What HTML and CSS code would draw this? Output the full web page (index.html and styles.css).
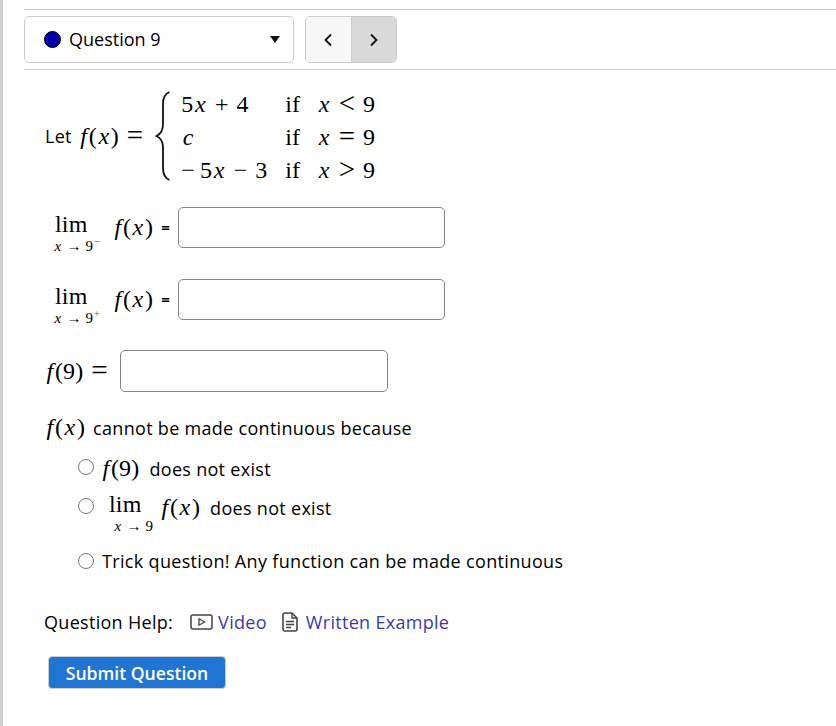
FILE: index.html
```html
<!DOCTYPE html>
<html>
<head>
    <meta charset="UTF-8">
    <link rel="stylesheet" href="styles.css">
</head>
<body>
    <div class="page">
        <div class="nav">
            <div class="select">
                <span class="dot"></span>
                <span class="select-label">Question 9</span>
                <span class="caret"></span>
            </div>
            <div class="pager">
                <button class="page-btn">
                    <svg width="10" height="14" viewBox="0 0 10 14"><path d="M8 1.5 2.5 7 8 12.5" fill="none" stroke="#111" stroke-width="1.8"/></svg>
                </button>
                <button class="page-btn page-btn-active">
                    <svg width="10" height="14" viewBox="0 0 10 14"><path d="M2 1.5 7.5 7 2 12.5" fill="none" stroke="#111" stroke-width="1.8"/></svg>
                </button>
            </div>
        </div>

        <div class="question">
            <div class="def">
                <span>Let</span>
                <span class="math"><i>f</i>(<i>x</i>) <span class="rel">=</span></span>
                <svg class="brace" width="16" height="90" viewBox="0 0 16 90">
                    <path d="M14.500 1C9.500 3 8 7 8 13V33C8 39 6 43 1.500 45C6 47 8 51 8 57V77C8 83 9.500 87 14.500 89" fill="none" stroke="#111" stroke-width="1.8"/>
                </svg>
                <div class="cases math">
                    <span>5<i>x</i> + 4</span><span>if</span><span><i>x</i> <span class="rel">&lt;</span> 9</span>
                    <span><i>c</i></span><span>if</span><span><i>x</i> <span class="rel">=</span> 9</span>
                    <span>&minus;&#8201;5<i>x</i> &minus; 3</span><span>if</span><span><i>x</i> <span class="rel">&gt;</span> 9</span>
                </div>
            </div>

            <div class="limit-row">
                <span class="lim math">lim<small><i>x</i> &rarr; 9<sup>&minus;</sup></small></span>
                <span class="math"><i>f</i>(<i>x</i>)</span>
                <b class="eq">=</b>
                <input class="answer" type="text">
            </div>

            <div class="limit-row">
                <span class="lim math">lim<small><i>x</i> &rarr; 9<sup>+</sup></small></span>
                <span class="math"><i>f</i>(<i>x</i>)</span>
                <b class="eq">=</b>
                <input class="answer" type="text">
            </div>

            <div class="value-row">
                <span class="math"><i>f</i>(9) <span class="rel">=</span></span>
                <input class="answer answer-wide" type="text">
            </div>

            <p class="prompt"><span class="math"><i>f</i>(<i>x</i>)</span> cannot be made continuous because</p>

            <ul class="choices">
                <li class="choice choice-one">
                    <input type="radio" name="why">
                    <span><span class="math"><i>f</i>(9)</span> does not exist</span>
                </li>
                <li class="choice choice-two">
                    <input type="radio" name="why">
                    <span class="lim lim-choice math">lim<small><i>x</i> &rarr; 9</small></span>
                    <span><span class="math"><i>f</i>(<i>x</i>)</span> does not exist</span>
                </li>
                <li class="choice choice-three">
                    <input type="radio" name="why">
                    <span>Trick question! Any function can be made continuous</span>
                </li>
            </ul>

            <div class="help">
                <span class="help-label">Question Help:</span>
                <a class="help-link" href="#">
                    <svg width="23" height="16" viewBox="0 0 23 16"><rect x="1" y="1" width="21" height="14" rx="2" fill="none" stroke="#444" stroke-width="1.5"/><path d="M9 4.800 14.500 8 9 11.200Z" fill="none" stroke="#444" stroke-width="1.3"/></svg>
                    Video
                </a>
                <a class="help-link" href="#">
                    <svg class="doc-icon" width="16" height="20" viewBox="0 0 16 20"><path d="M1 3C1 2 2 1 3 1H10L15 6V17C15 18 14 19 13 19H3C2 19 1 18 1 17Z" fill="none" stroke="#444" stroke-width="1.6"/><path d="M10 1V6H15M4 9.500H12M4 12.500H12M4 15.500H9" fill="none" stroke="#444" stroke-width="1.4"/></svg>
                    Written Example
                </a>
            </div>

            <button class="submit">Submit Question</button>
        </div>
    </div>
</body>
</html>
```
FILE: styles.css
```css
* {
    box-sizing: border-box;
}

html, body {
    height: 100%;
}

body {
    margin: 0;
    background: #fff;
    color: #000;
    font-family: "Open Sans", Tahoma, sans-serif;
    font-size: 18px;
    letter-spacing: 0.3px;
    border-left: 3px solid #d0d0d6;
    overflow: hidden;
}

.page {
    padding: 9px 0 0 21px;
}

.nav {
    display: flex;
    gap: 11px;
    border-top: 1px solid #ccc;
    border-bottom: 1px solid #ccc;
    padding: 6px 0;
    height: 61px;
}

.select {
    width: 270px;
    height: 47px;
    border: 1px solid #ccc;
    border-radius: 5px;
    display: flex;
    align-items: center;
    padding: 0 13px 0 19px;
}

.dot {
    width: 17px;
    height: 17px;
    border-radius: 50%;
    background: #0000aa;
    border: 1px solid #000;
    margin-right: 8px;
}

.select-label {
    flex: 1;
    letter-spacing: 0;
    margin-top: -2px;
}

.caret {
    width: 0;
    height: 0;
    border-left: 5px solid transparent;
    border-right: 5px solid transparent;
    border-top: 7px solid #111;
}

.pager {
    display: flex;
    height: 47px;
    border: 1px solid #ccc;
    border-radius: 5px;
    overflow: hidden;
}

.page-btn {
    width: 45px;
    border: none;
    background: #f7f7f7;
    padding: 0 2px 0 0;
    display: flex;
    align-items: center;
    justify-content: center;
}

.page-btn-active {
    width: 45px;
    background: #d9d9d9;
    border-left: 1px solid #ccc;
    padding: 0;
}

.question {
    padding-left: 21px;
}

.math {
    font-family: "Liberation Serif", serif;
    font-size: 24px;
    letter-spacing: 0.2px;
    word-spacing: 1.5px;
    white-space: nowrap;
}

.math i {
    padding: 0 1.5px;
}

/* relation signs are wider in the math font */
.rel {
    font-size: 29px;
    line-height: 0;
    vertical-align: -1px;
}

.def {
    display: flex;
    align-items: center;
    gap: 7px;
    margin-top: 21px;
    height: 90px;
}

.brace {
    margin-left: 5px;
}

.cases {
    display: grid;
    grid-template-columns: 104px 32px auto;
    row-gap: 6px;
    line-height: 27px;
    margin: 2px 0 0 3px;
}

.limit-row {
    display: flex;
    align-items: center;
    margin-top: 21px;
    height: 50px;
    padding-left: 10px;
}

.limit-row + .limit-row {
    margin-top: 22px;
}

.lim {
    display: inline-flex;
    flex-direction: column;
    align-items: flex-start;
    width: 58px;
    line-height: 27px;
    margin-top: 12px;
}

.lim small {
    font-size: 15px;
    line-height: 17px;
    letter-spacing: 0.6px;
    margin-left: -2px;
    word-spacing: -1px;
}

.lim sup {
    font-size: 11px;
    line-height: 0;
    color: #555;
}

.eq {
    margin: 0 8px 0 8px;
    font-size: 15px;
    letter-spacing: 0;
}

.answer {
    width: 267px;
    height: 41px;
    border: 1px solid #858585;
    border-radius: 5px;
    background: #fff;
    outline: none;
}

.value-row {
    display: flex;
    align-items: center;
    gap: 12px;
    margin-top: 26px;
    height: 42px;
}

.answer-wide {
    width: 268px;
    height: 42px;
}

.prompt {
    margin: 19px 0 0;
    height: 32px;
    line-height: 32px;
}

.prompt .math {
    margin-right: 3px;
}

.choices {
    list-style: none;
    margin: 0;
    padding: 0 0 0 33px;
}

.choice {
    display: flex;
    align-items: center;
    gap: 7px;
}

.choice input {
    width: 16px;
    height: 16px;
    margin: -3px 0 0;
}

.choice .math {
    margin-right: 5px;
}

.choice-one {
    margin-top: 9px;
    height: 32px;
}

.choice-two {
    margin-top: 8px;
    height: 30px;
}

.choice-three {
    margin-top: 24px;
    height: 30px;
    letter-spacing: 0.33px;
}

.choice-three input {
    margin: -1px 1px 0 0;
}

.lim-choice {
    width: 43px;
    margin-left: 8px;
    margin-top: 11px;
}

.choice .lim-choice {
    margin-right: 1px;
}

.lim-choice small {
    margin-left: 4px;
}

.help {
    display: flex;
    align-items: center;
    margin-top: 31px;
    margin-left: -1px;
    height: 30px;
}

.help-label {
    margin-right: 17px;
}

.help-link {
    display: flex;
    align-items: center;
    gap: 5px;
    color: #3a3ab0;
    text-decoration: none;
    margin-right: 15px;
}

.doc-icon {
    margin-right: 3px;
}

.submit {
    display: block;
    margin: 19px 0 0 3px;
    width: 178px;
    height: 33px;
    border: 1px solid #ccc;
    border-radius: 4px;
    background: #1f74d4;
    color: #fff;
    font-family: inherit;
    font-size: 17.6px;
    font-weight: 600;
    letter-spacing: 0;
    padding: 0;
}
```
